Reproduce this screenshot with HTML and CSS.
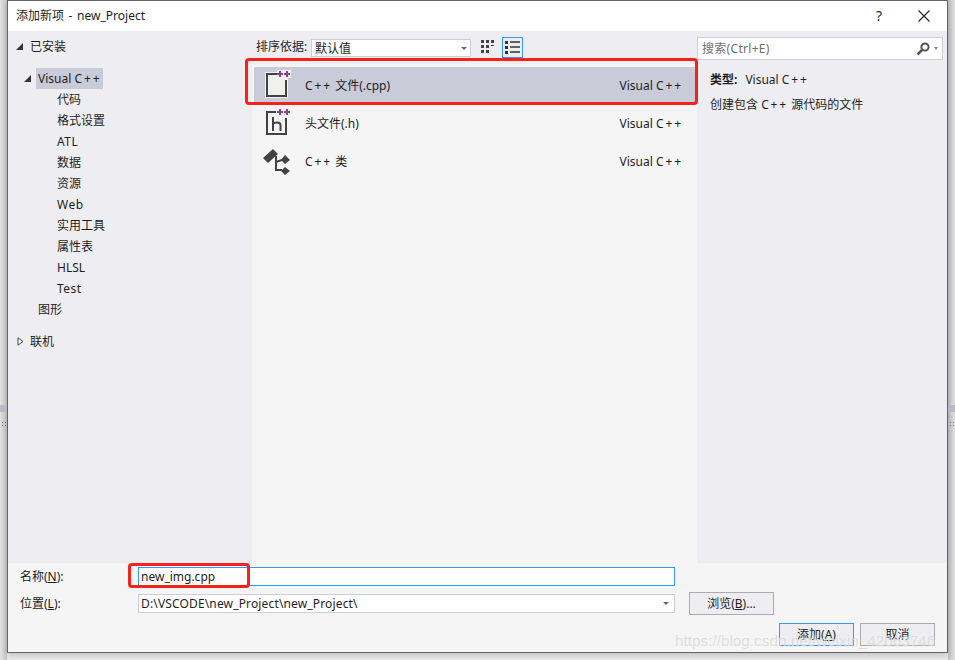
FILE: index.html
```html
<!DOCTYPE html>
<html lang="zh-CN">
<head>
<meta charset="utf-8">
<title>添加新项 - new_Project</title>
<link rel="stylesheet" href="styles.css">
</head>
<body>
<div class="band band-left"></div>
<div class="band band-right"></div>
<div class="dots dots-left"></div>
<div class="dots dots-right"></div>
<div class="dialog">
  <header class="titlebar">
    <span class="title">添加新项 - new_Project</span>
    <span class="help">?</span>
    <svg class="close" width="12" height="12" viewBox="0 0 12 12"><path d="M.5.5l11 11M11.500.5l-11 11" stroke="#222" stroke-width="1.100" fill="none"/></svg>
  </header>
  <main class="body">
    <nav class="tree">
      <div class="row top"><svg class="tri" width="7" height="7" viewBox="0 0 7 7"><path d="M7 0v7H0z" fill="#333"/></svg><span>已安装</span></div>
      <div class="row vc"><svg class="tri" width="7" height="7" viewBox="0 0 7 7"><path d="M7 0v7H0z" fill="#333"/></svg><span class="sel">Visual <span class="cpp">C++</span></span></div>
      <div class="row leaf">代码</div>
      <div class="row leaf">格式设置</div>
      <div class="row leaf latin">ATL</div>
      <div class="row leaf">数据</div>
      <div class="row leaf">资源</div>
      <div class="row leaf latin">Web</div>
      <div class="row leaf">实用工具</div>
      <div class="row leaf">属性表</div>
      <div class="row leaf">HLSL</div>
      <div class="row leaf latin">Test</div>
      <div class="row mid">图形</div>
      <div class="row online"><svg class="tri" width="7" height="9" viewBox="0 0 7 9"><path d="M1 .8L6 4.500 1 8.200z" fill="#fff" stroke="#444"/></svg><span>联机</span></div>
    </nav>
    <section class="center">
      <div class="toolbar">
        <label class="sortlabel">排序依据:</label>
        <div class="select sort"><span>默认值</span><i class="caret"></i></div>
        <svg class="viewicon" width="16" height="16" viewBox="0 0 16 16"><path d="M1 1h3v3H1zM6 1h3v3H6zM11 1h3v3h-3zM1 6h3v3H1zM6 6h3v3H6zM11 6h3v1h-3zM1 11h3v3H1zM6 11h3v3H6z" fill="#444"/></svg>
        <div class="viewbtn"><svg width="17" height="15" viewBox="0 0 17 15"><path d="M1 1h3v3H1zM1 6h3v3H1zM1 11h3v3H1z" fill="#333"/><path d="M6 2h10M6 7h10M6 12h10" stroke="#333" stroke-width="1.300"/></svg></div>
      </div>
      <div class="list">
        <div class="item active">
          <svg class="ico" width="30" height="30" viewBox="0 0 30 30"><path d="M2 2h12V0h14v8h-3v20H2z" fill="#f3f3f3"/><path d="M14 4H4v22h19V10" fill="#f0f0ef" stroke="#424242" stroke-width="2"/><path d="M14 4h6M17 1v6M21 4h6M24 1v6" stroke="#913f91" stroke-width="2" fill="none"/></svg>
          <span class="name"><span class="cpp">C++</span> 文件(.cpp)</span><span class="lang">Visual <span class="cpp">C++</span></span>
        </div>
        <div class="item">
          <svg class="ico" width="30" height="30" viewBox="0 0 30 30"><path d="M13 4H4v22h19V10" fill="none" stroke="#424242" stroke-width="2"/><path d="M10 9v14M10 16c1.500-2 7.500-2.500 7.500 1v6" fill="none" stroke="#424242" stroke-width="2"/><path d="M14 4h6M17 1v6M21 4h6M24 1v6" stroke="#913f91" stroke-width="2" fill="none"/></svg>
          <span class="name">头文件(.h)</span><span class="lang">Visual <span class="cpp">C++</span></span>
        </div>
        <div class="item">
          <svg class="ico" width="30" height="30" viewBox="-1 0 30 30"><path d="M12 10v14h6M12 16l6-2" fill="none" stroke="#424242" stroke-width="2"/><path d="M-1 12l10-9 5 5-10 9zM17 14l4-5 5 5-5 4zM17 25l4-4 5 4-5 4z" fill="#424242"/></svg>
          <span class="name"><span class="cpp">C++</span> 类</span><span class="lang">Visual <span class="cpp">C++</span></span>
        </div>
      </div>
    </section>
    <aside class="info">
      <div class="search"><span>搜索(Ctrl+E)</span><svg width="14" height="14" viewBox="0 0 14 14"><circle cx="9" cy="5" r="3.600" fill="none" stroke="#555" stroke-width="2"/><path d="M6.500 7.500L1.500 12.500" stroke="#555" stroke-width="2.500"/></svg><i class="caret small"></i></div>
      <p class="type"><b>类型:</b><span>Visual <span class="cpp">C++</span></span></p>
      <p class="desc">创建包含 <span class="cpp">C++</span> 源代码的文件</p>
    </aside>
  </main>
  <footer class="footer">
    <div class="frow first">
      <span class="flabel">名称(<u>N</u>):</span>
      <div class="field focus">new_img.cpp</div>
    </div>
    <div class="frow second">
      <span class="flabel">位置(<u>L</u>):</span>
      <div class="field path"><span>D:\VSCODE\new_Project\new_Project\</span><i class="caret"></i></div>
      <button class="btn browse">浏览(<u>B</u>)...</button>
    </div>
    <div class="actions">
      <button class="btn primary">添加(<u>A</u>)</button>
      <button class="btn">取消</button>
    </div>
  </footer>
</div>
<div class="mark mark-item"></div>
<div class="mark mark-name"></div>
<div class="watermark">https://blog.csdn.net/weixin_42063746</div>
</body>
</html>
```

FILE: styles.css
```css
* { box-sizing: border-box; }
html, body { margin: 0; height: 660px; overflow: hidden; }
body {
  position: relative;
  padding: 0 7px 7px;
  background: #e8e8e8;
  font: 12px/21px "Noto Sans", "Noto Sans CJK SC", sans-serif;
  color: #1e1e1e;
}
body::before {
  content: "";
  position: absolute;
  left: 0; top: 0; width: 955px; height: 660px;
  background:
    linear-gradient(90deg, #e2e2e2 0, #c4c4c4 7px, transparent 7px, transparent 948px, #c0c0c0 948px, #e0e0e0 955px);
}
.band { position: absolute; top: 405px; height: 7px; width: 7px; background: #b9b9c6; z-index: 1; }
.band-left { left: 0; }
.band-right { left: 948px; }
.dots {
  position: absolute; top: 421px; width: 6px; height: 5px; z-index: 1;
  background: radial-gradient(circle, #777 0 1px, transparent 1px) 0 0 / 3px 3px;
}
.dots-left { left: 1px; }
.dots-right { left: 949px; }

.dialog {
  position: relative;
  width: 941px; height: 653px;
  display: flex; flex-direction: column;
  border: 1px solid #646464;
  background: #f5f5f5;
  box-shadow: 0 2px 6px rgba(0,0,0,.18);
}
.titlebar {
  flex: 0 0 30px;
  display: flex; align-items: center;
  padding: 0 17px 2px 8px;
  background: #fff;
}
.title { flex: 1; word-spacing: 1.500px; }
.help { margin-right: 36px; font-size: 14px; }
.close { margin-top: 2px; }

.body {
  flex: 0 0 532px;
  display: grid;
  grid-template-columns: 244px 445px 250px;
  background: #eeeef2;
}
.tree { padding-top: 5px; }
.row { height: 21px; display: flex; align-items: center; white-space: nowrap; }
.latin { letter-spacing: .5px; }
.cpp { letter-spacing: 1.900px; }
.top { padding-left: 8px; gap: 7px; margin-bottom: 11px; }
.vc { padding-left: 16px; gap: 5px; }
.sel { background: #c9cbd8; padding: 0 2px; height: 21px; }
.leaf { padding-left: 49px; }
.mid { padding-left: 30px; }
.online { padding-left: 9px; gap: 6px; margin-top: 11px; }

.toolbar {
  height: 33px;
  padding: 6px 0 0 4px;
  display: flex; align-items: flex-start;
  background: #eeeef2;
}
.sortlabel { width: 55px; line-height: 20px; }
.select {
  display: flex; align-items: center; justify-content: space-between;
  background: #fff; border: 1px solid #cccedb;
}
.sort { width: 160px; height: 18px; padding: 1px 3px 0; margin-top: 2px; line-height: 16px; }
.caret {
  width: 0; height: 0; display: block;
  border: 3px solid transparent; border-top: 3px solid #666; border-bottom: 0;
}
.viewicon { margin: 2px 0 0 9px; }
.viewbtn {
  width: 21px; height: 21px; margin-left: 6px;
  border: 1px solid #3399ff;
  display: flex; align-items: center; justify-content: center;
  background: #eeeef2;
}
.center { background: #f5f5f5; }
.list { padding: 3px 2px 0; }
.item {
  height: 38px;
  display: flex; align-items: center;
  padding: 0 12px 2px 9px;
}
.item.active { background: #c9cbd8; }
.ico { margin-right: 12px; flex: none; }
.name { flex: 1; }

.info { padding: 6px 4px 0 0; }
.search {
  height: 23px; background: #fff; border: 1px solid #cccedb;
  display: flex; align-items: center; gap: 4px;
  padding: 0 4px; color: #707070;
}
.search span { flex: 1; letter-spacing: .3px; }
.small { border-width: 3px 2.500px 0; border-top-color: #888; }
.info p { margin: 0; padding-left: 13px; }
.info .type { margin-top: 9px; display: flex; gap: 8px; }
.type b { font-weight: 700; }
.info .desc { margin-top: 4px; }

.footer { flex: 1; padding-top: 4px; position: relative; }
.frow { display: flex; align-items: center; padding-left: 12px; }
.flabel { width: 118px; flex: none; }
.field {
  width: 537px; height: 19px; line-height: 17px; padding: 0 2px;
  background: #fff; border: 1px solid #cccedb;
}
.focus { border-color: #3399ff; }
.path { display: flex; align-items: center; justify-content: space-between; padding-right: 5px; letter-spacing: .15px; }
.first { height: 19px; }
.second { margin-top: 6px; height: 23px; }
.btn {
  width: 75px; height: 23px; padding: 0;
  font: inherit; color: inherit; line-height: 20px;
  background: #eeeef2; border: 1px solid #acacac;
}
.browse { width: 85px; margin-left: 14px; }
.actions {
  display: flex; justify-content: flex-end; gap: 6px;
  margin-top: 8px; padding-right: 12px;
}
.primary { border-color: #3399ff; }

.mark {
  position: absolute;
  border: 3px solid #f5221b;
  border-radius: 4px;
  pointer-events: none;
}
.mark-item { left: 245px; top: 58px; width: 453px; height: 47px; }
.mark-name { left: 128px; top: 563px; width: 122px; height: 25px; }
.watermark {
  position: absolute;
  left: 675px; top: 631px;
  font: 15.300px/20px "Liberation Sans", sans-serif;
  color: rgba(190,190,190,.5);
  text-shadow: 0 0 1px rgba(255,255,255,.8);
  white-space: nowrap;
}
```
